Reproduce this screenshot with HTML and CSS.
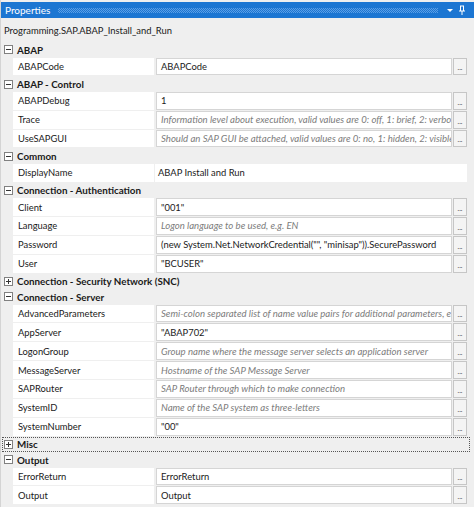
FILE: index.html
```html
<!DOCTYPE html>
<html lang="en">

<head>
    <meta charset="UTF-8">
    <meta name="viewport" content="width=device-width, initial-scale=1.0">
    <title>Properties</title>
    <link rel="stylesheet" href="styles.css">
</head>

<body>
    <div class="panel">
        <div class="title-bar">
            <span class="title">Properties</span>
            <span class="grip"></span>
            <svg class="title-icon" width="8" height="8" viewBox="0 0 8 8">
                <path d="M1 3h6L4 6z" fill="#fff"/>
            </svg>
            <svg class="title-icon" width="8" height="10" viewBox="0 0 8 10">
                <path d="M2 1h4M2.5 1v5M5.5 1v5M1 6h6M4 6v4" stroke="#fff" fill="none"/>
            </svg>
        </div>

        <div class="object-name">Programming.SAP.ABAP_Install_and_Run</div>

        <div class="grid">
            <div class="category"><span class="toggle expanded"></span>ABAP</div>
            <div class="prop">
                <div class="prop-name">ABAPCode</div>
                <div class="prop-box">ABAPCode</div>
                <div class="more">...</div>
            </div>

            <div class="category"><span class="toggle expanded"></span>ABAP - Control</div>
            <div class="prop">
                <div class="prop-name">ABAPDebug</div>
                <div class="prop-box">1</div>
                <div class="more">...</div>
            </div>
            <div class="prop">
                <div class="prop-name">Trace</div>
                <div class="prop-box hint">Information level about execution, valid values are 0: off, 1: brief, 2: verbose</div>
                <div class="more">...</div>
            </div>
            <div class="prop">
                <div class="prop-name">UseSAPGUI</div>
                <div class="prop-box hint">Should an SAP GUI be attached, valid values are 0: no, 1: hidden, 2: visible</div>
                <div class="more">...</div>
            </div>

            <div class="category"><span class="toggle expanded"></span>Common</div>
            <div class="prop plain">
                <div class="prop-name">DisplayName</div>
                <div class="prop-text">ABAP Install and Run</div>
            </div>

            <div class="category"><span class="toggle expanded"></span>Connection - Authentication</div>
            <div class="prop">
                <div class="prop-name">Client</div>
                <div class="prop-box">"001"</div>
                <div class="more">...</div>
            </div>
            <div class="prop">
                <div class="prop-name">Language</div>
                <div class="prop-box hint">Logon language to be used, e.g. EN</div>
                <div class="more">...</div>
            </div>
            <div class="prop">
                <div class="prop-name">Password</div>
                <div class="prop-box">(new System.Net.NetworkCredential("", "minisap")).SecurePassword</div>
                <div class="more">...</div>
            </div>
            <div class="prop">
                <div class="prop-name">User</div>
                <div class="prop-box">"BCUSER"</div>
                <div class="more">...</div>
            </div>

            <div class="category"><span class="toggle"></span>Connection - Security Network (SNC)</div>

            <div class="category"><span class="toggle expanded"></span>Connection - Server</div>
            <div class="prop">
                <div class="prop-name">AdvancedParameters</div>
                <div class="prop-box hint">Semi-colon separated list of name value pairs for additional parameters, e.g.</div>
                <div class="more">...</div>
            </div>
            <div class="prop">
                <div class="prop-name">AppServer</div>
                <div class="prop-box">"ABAP702"</div>
                <div class="more">...</div>
            </div>
            <div class="prop">
                <div class="prop-name">LogonGroup</div>
                <div class="prop-box hint">Group name where the message server selects an application server</div>
                <div class="more">...</div>
            </div>
            <div class="prop">
                <div class="prop-name">MessageServer</div>
                <div class="prop-box hint">Hostname of the SAP Message Server</div>
                <div class="more">...</div>
            </div>
            <div class="prop">
                <div class="prop-name">SAPRouter</div>
                <div class="prop-box hint">SAP Router through which to make connection</div>
                <div class="more">...</div>
            </div>
            <div class="prop">
                <div class="prop-name">SystemID</div>
                <div class="prop-box hint">Name of the SAP system as three-letters</div>
                <div class="more">...</div>
            </div>
            <div class="prop">
                <div class="prop-name">SystemNumber</div>
                <div class="prop-box">"00"</div>
                <div class="more">...</div>
            </div>

            <div class="category selected"><span class="toggle"></span>Misc</div>

            <div class="category"><span class="toggle expanded"></span>Output</div>
            <div class="prop">
                <div class="prop-name">ErrorReturn</div>
                <div class="prop-box">ErrorReturn</div>
                <div class="more">...</div>
            </div>
            <div class="prop">
                <div class="prop-name">Output</div>
                <div class="prop-box">Output</div>
                <div class="more">...</div>
            </div>
        </div>
    </div>
</body>

</html>
```

FILE: styles.css
```css
* {
    margin: 0;
    padding: 0;
    box-sizing: border-box;
}

body {
    font-family: Lato, "Open Sans", Arial, sans-serif;
    font-size: 9.4px;
    color: #1a1a1a;
    background-color: white;
}

.panel {
    width: 474px;
    height: 507px;
    padding-top: 2px;
    background-color: #efefef;
    border-left: 1px solid #d4d4d4;
    overflow: hidden;
}

.title-bar {
    height: 16px;
    display: flex;
    align-items: center;
    gap: 4px;
    padding: 0 8px 0 4px;
    background-color: #1c76d2;
    color: white;
    font-size: 10px;
}

.grip {
    flex: 1;
    height: 5px;
    margin: 0 4px;
    background: repeating-conic-gradient(#5c9fe6 0 25%, transparent 0 50%) 0 0 / 2px 2px;
}

.title-icon {
    display: block;
}

.object-name {
    height: 24px;
    display: flex;
    align-items: center;
    padding-left: 3px;
}

.grid {
    padding-right: 4px;
}

.category {
    height: 15.5px;
    display: flex;
    align-items: center;
    gap: 4px;
    padding-left: 3px;
    font-weight: 700;
    font-size: 9.8px;
}

.category.selected {
    outline: 1px dotted #555;
    outline-offset: -1px;
    margin-left: 1px;
    padding-left: 2px;
}

.toggle {
    position: relative;
    width: 9px;
    height: 9px;
    border: 1px solid #808080;
    background-color: white;
}

.toggle::before,
.toggle::after {
    content: "";
    position: absolute;
    background-color: #333;
}

.toggle::before {
    left: 1px;
    top: 3px;
    width: 5px;
    height: 1px;
}

.toggle::after {
    left: 3px;
    top: 1px;
    width: 1px;
    height: 5px;
}

.toggle.expanded::after {
    display: none;
}

.prop {
    height: 18.85px;
    display: flex;
    padding: 0 3px 1px 12px;
}

.prop-name {
    width: 141px;
    padding-left: 5px;
    display: flex;
    align-items: center;
    background-color: white;
}

.prop-box {
    flex: 1;
    min-width: 0;
    margin-left: 2px;
    padding-left: 4px;
    display: flex;
    align-items: center;
    white-space: nowrap;
    overflow: hidden;
    background-color: white;
    border: 1px solid #d5d5d5;
}

.prop-box.hint {
    font-style: italic;
    font-size: 9.6px;
    color: #7c7c7c;
}

.more {
    width: 14px;
    margin-left: 1px;
    display: flex;
    align-items: flex-end;
    justify-content: center;
    padding-bottom: 3px;
    font-size: 7px;
    line-height: 1;
    color: #444;
    background-color: #f4f4f4;
    border: 1px solid #c6c6c6;
}

.prop.plain .prop-text {
    flex: 1;
    margin-left: 1px;
    padding-left: 3px;
    display: flex;
    align-items: center;
    background-color: white;
}
```
